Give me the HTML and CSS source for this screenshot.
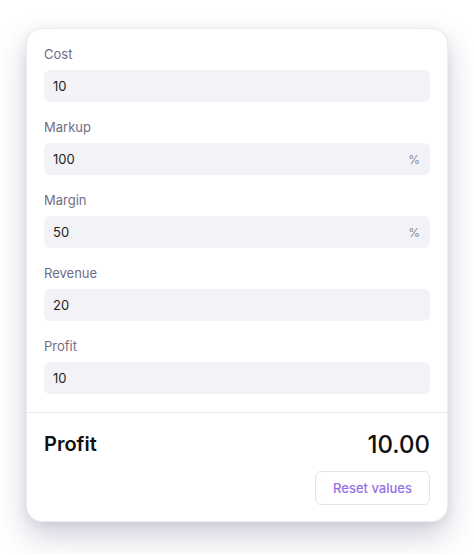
FILE: index.html
```html
<!DOCTYPE html>
<html>
<head>
<meta charset="utf-8">
<link rel="stylesheet" href="styles.css">
</head>
<body>
<div class="page">
  <div class="card">
    <div class="fields">
      <div class="field">
        <div class="label">Cost</div>
        <div class="input"><span>10</span></div>
      </div>
      <div class="field">
        <div class="label">Markup</div>
        <div class="input"><span>100</span><span class="unit">%</span></div>
      </div>
      <div class="field">
        <div class="label">Margin</div>
        <div class="input"><span>50</span><span class="unit">%</span></div>
      </div>
      <div class="field">
        <div class="label">Revenue</div>
        <div class="input"><span>20</span></div>
      </div>
      <div class="field">
        <div class="label">Profit</div>
        <div class="input"><span>10</span></div>
      </div>
    </div>
    <div class="footer">
      <div class="result">
        <span class="result-label">Profit</span>
        <span class="result-value">10.00</span>
      </div>
      <div class="actions">
        <button class="reset">Reset values</button>
      </div>
    </div>
  </div>
</div>
</body>
</html>
```
FILE: styles.css
```css
html, body {
  margin: 0;
  padding: 0;
  background: #ffffff;
  font-family: Inter, "Noto Sans", sans-serif;
}
.page {
  padding: 28px 26px 32px 26px;
}
.card {
  background: #fff;
  border-radius: 16px;
  border: 1px solid #ecebf1;
  box-shadow: 0 14px 30px rgba(60, 50, 100, 0.24), 0 2px 8px rgba(60, 50, 100, 0.08);
  height: 494px;
  box-sizing: border-box;
  display: flex;
  flex-direction: column;
}
.fields {
  padding: 15px 17px 18px 17px;
  display: flex;
  flex-direction: column;
  gap: 15px;
}
.label {
  font-size: 13px;
  line-height: 20px;
  color: #6f6e85;
  margin-bottom: 6px;
}
.input {
  height: 32px;
  background: #f3f2f7;
  border-radius: 6px;
  display: flex;
  align-items: center;
  justify-content: space-between;
  padding: 0 10px 0 9px;
  font-size: 13px;
  color: #1f1f26;
}
.unit {
  color: #8a8895;
  font-size: 12px;
}
.footer {
  border-top: 1px solid #ecebf1;
  padding: 15px 17px 0 17px;
  display: flex;
  flex-direction: column;
  gap: 11px;
}
.result {
  display: flex;
  justify-content: space-between;
  align-items: center;
  height: 32px;
  color: #111114;
}
.result-label {
  font-size: 20px;
  font-weight: 600;
}
.result-value {
  font-size: 24px;
  font-weight: 500;
}
.actions {
  display: flex;
  justify-content: flex-end;
}
.reset {
  width: 115px;
  height: 34px;
  background: #fff;
  border: 1px solid #e3e2ea;
  border-radius: 6px;
  color: #9470e6;
  font-family: Inter, "Noto Sans", sans-serif;
  font-size: 13px;
  font-weight: 500;
}
```
